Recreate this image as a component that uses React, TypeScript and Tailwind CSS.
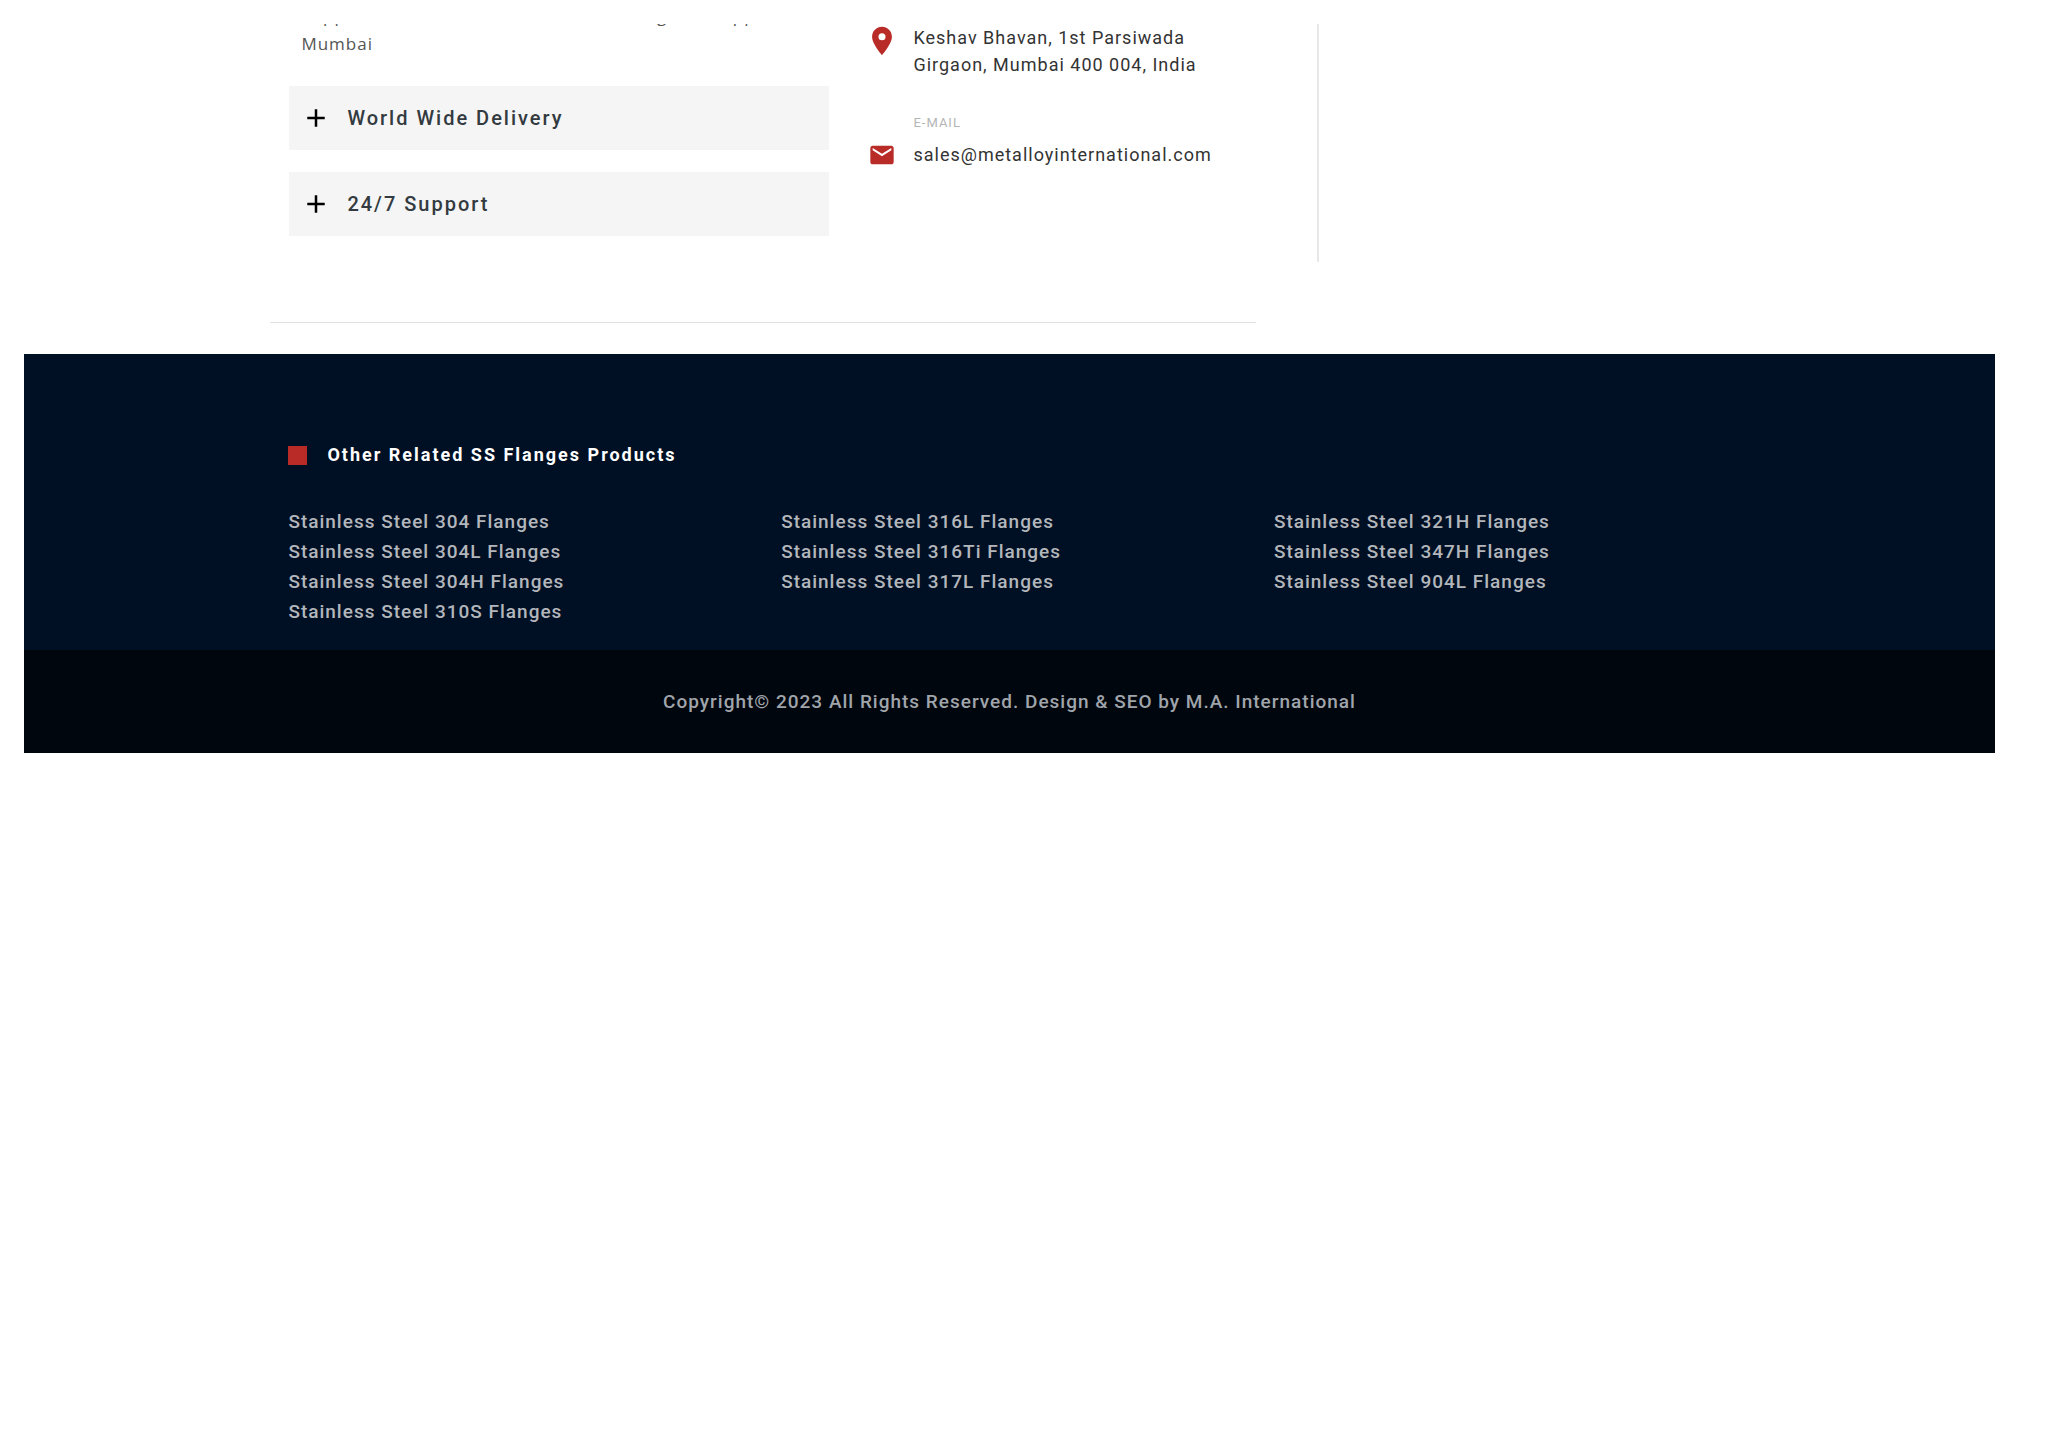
import React, { useState } from 'react';
import { MdAdd, MdEmail, MdLocationOn, MdRemove } from 'react-icons/md';

const accordionItems = ['World Wide Delivery', '24/7 Support'];

const relatedProducts = [
  ['304', '304L', '304H', '310S'],
  ['316L', '316Ti', '317L'],
  ['321H', '347H', '904L'],
];

const AccordionItem: React.FC<{ title: string }> = ({ title }) => {
  const [open, setOpen] = useState(false);
  const Icon = open ? MdRemove : MdAdd;

  return (
    <button
      type="button"
      aria-expanded={open}
      onClick={() => setOpen(!open)}
      className="flex h-16 w-full cursor-pointer items-center gap-4 bg-[#f5f5f5] px-3 text-left text-[20px] font-medium tracking-[2px] text-[#333a40]"
    >
      <Icon className="size-[30px] shrink-0 text-black" />
      {title}
    </button>
  );
};

const Contact: React.FC = () => (
  <address className="flex-1 text-[18px] leading-[27px] tracking-[1px] text-[#333] not-italic">
    <div className="flex gap-[14px]">
      <MdLocationOn className="size-[34px] shrink-0 text-[#b92b27]" />
      <p>
        Keshav Bhavan, 1st Parsiwada
        <br />
        Girgaon, Mumbai 400 004, India
      </p>
    </div>
    <p className="mt-[33px] pl-12 text-[13px] leading-6 text-[#b5b5b5]">
      E-MAIL
    </p>
    <div className="mt-1.5 flex gap-[14px]">
      <span className="flex w-[34px] shrink-0 justify-center">
        <MdEmail className="size-7 text-[#b92b27]" />
      </span>
      <a href="mailto:sales@metalloyinternational.com">sales@metalloyinternational.com</a>
    </div>
  </address>
);

export default function App() {
  return (
    <div className="min-h-screen bg-white pt-6 pr-[53px] pl-6 font-[Roboto,sans-serif]">
      <main className="mx-auto flex w-3/4">
        <section className="w-2/3 shrink-0 border-b border-[#e2e2e2] px-[19px] pb-[86px]">
          <div className="flex gap-9">
            <div className="w-[57%] shrink-0">
              {/* Panel text, only its last lines stay in view */}
              <div className="flex h-[34px] flex-col justify-end overflow-hidden px-3 font-['Open_Sans',sans-serif] text-[17px] leading-7 tracking-[1px] text-[#555]">
                <p>
                  Suppliers, Stainless Steel 316Ti and Flanges &amp; Supplier
                  <br />
                  Mumbai
                </p>
              </div>
              <div className="mt-7 flex flex-col gap-[22px]">
                {accordionItems.map(title => (
                  <AccordionItem key={title} title={title} />
                ))}
              </div>
            </div>
            <Contact />
          </div>
        </section>
        <aside className="mb-[61px] ml-[61px] flex-1 border-l-2 border-[#e8e8e8]" />
      </main>

      <footer className="mt-[31px]">
        <div className="bg-[#001024] pt-[87px] pb-[23px]">
          <div className="mx-auto w-3/4">
            <h2 className="flex items-center gap-5 px-[18px] text-[18px] leading-7 font-bold tracking-[2px] text-white">
              <span className="size-[19px] bg-[#b92b27]" />
              Other Related SS Flanges Products
            </h2>
            <div className="mt-[38px] grid grid-cols-3 text-[19px] leading-[30px] font-medium tracking-[1px] text-[#b3b6bb]">
              {relatedProducts.map(column => (
                <ul key={column[0]} className="px-[18px]">
                  {column.map(grade => (
                    <li key={grade}>
                      <a href={`#${grade}`} className="hover:text-white">
                        Stainless Steel {grade} Flanges
                      </a>
                    </li>
                  ))}
                </ul>
              ))}
            </div>
          </div>
        </div>
        <p className="bg-[#00060e] py-9 text-center text-[19px] leading-[31px] font-medium tracking-[1px] text-[#a0a5ab]">
          Copyright© 2023 All Rights Reserved. Design &amp; SEO by M.A. International
        </p>
      </footer>
    </div>
  );
}
